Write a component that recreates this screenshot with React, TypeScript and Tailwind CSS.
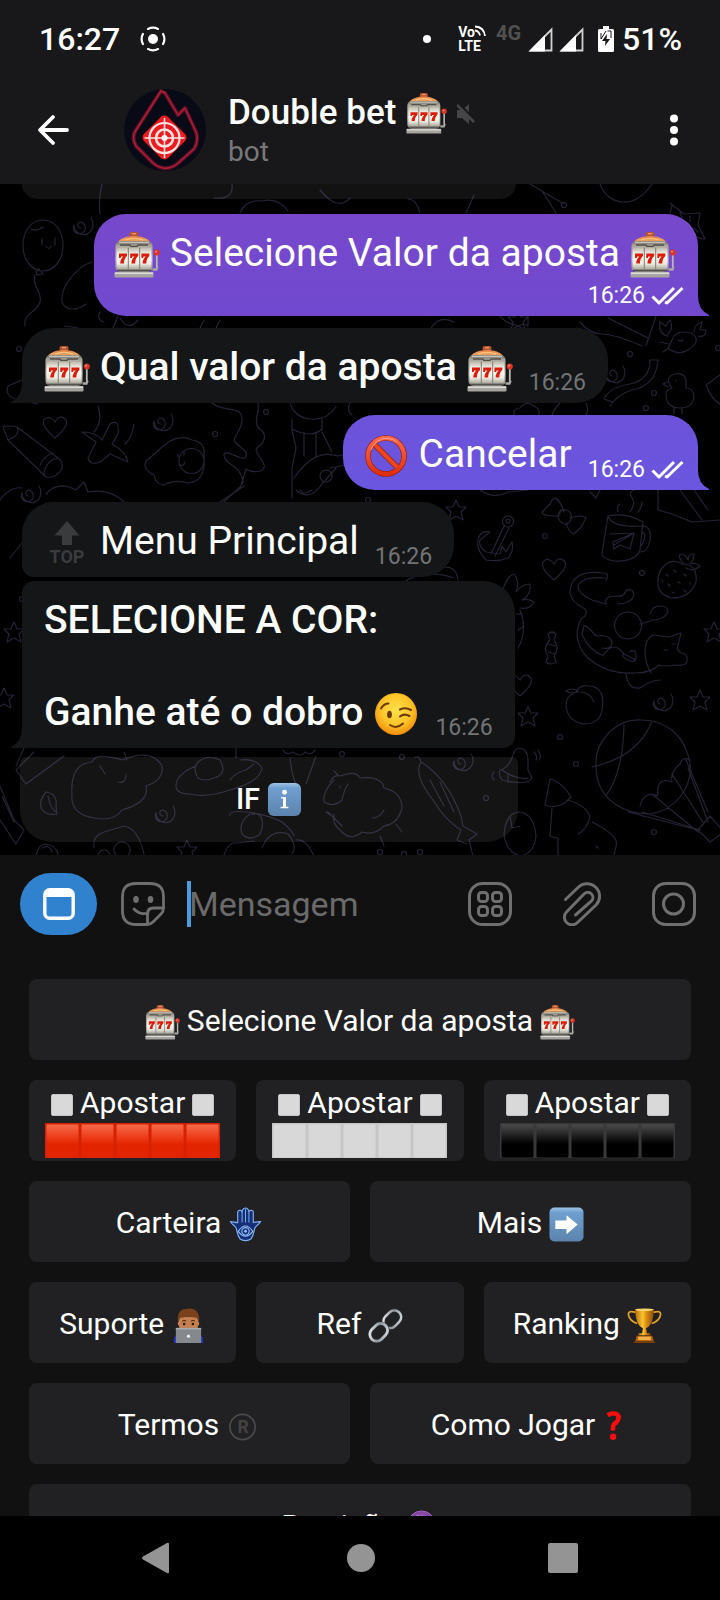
import type { ReactNode } from "react";

type IconProps = { className?: string };

// ---------- emoji ----------

function SharedGradients() {
  return (
    <svg className="absolute h-0 w-0" aria-hidden="true">
      <defs>
        <linearGradient id="dome" x1="0" y1="0" x2="0" y2="1">
          <stop offset="0" stopColor="#e07a45" />
          <stop offset="0.6" stopColor="#f3a45c" />
          <stop offset="1" stopColor="#d08048" />
        </linearGradient>
        <linearGradient id="steel" x1="0" y1="0" x2="0" y2="1">
          <stop offset="0" stopColor="#6f6c64" />
          <stop offset="0.15" stopColor="#a8a59b" />
          <stop offset="0.6" stopColor="#dbd9d1" />
          <stop offset="1" stopColor="#8a8880" />
        </linearGradient>
        <linearGradient id="reel" x1="0" y1="0" x2="0" y2="1">
          <stop offset="0" stopColor="#bdb8a9" />
          <stop offset="0.35" stopColor="#fcfbf5" />
          <stop offset="0.75" stopColor="#eeece4" />
          <stop offset="1" stopColor="#b0ac9f" />
        </linearGradient>
        <linearGradient id="blueTile" x1="0" y1="0" x2="0" y2="1">
          <stop offset="0" stopColor="#9fc4e6" />
          <stop offset="0.15" stopColor="#6f9fd0" />
          <stop offset="1" stopColor="#5c83ad" />
        </linearGradient>
        <linearGradient id="redTile" x1="0" y1="0" x2="0" y2="1">
          <stop offset="0" stopColor="#f56a4a" />
          <stop offset="0.45" stopColor="#ec3512" />
          <stop offset="0.6" stopColor="#e32400" />
        </linearGradient>
        <linearGradient id="blackTile" x1="0" y1="0" x2="0" y2="1">
          <stop offset="0" stopColor="#4c4a4a" />
          <stop offset="0.5" stopColor="#0b0b0b" />
          <stop offset="0.6" stopColor="#000" />
        </linearGradient>
        <linearGradient id="gold" x1="0" y1="0" x2="1" y2="0">
          <stop offset="0" stopColor="#b96a08" />
          <stop offset="0.4" stopColor="#fbc531" />
          <stop offset="0.6" stopColor="#d98e12" />
          <stop offset="1" stopColor="#8f4d04" />
        </linearGradient>
        <linearGradient id="chain" x1="0" y1="0" x2="1" y2="1">
          <stop offset="0" stopColor="#f3f5f7" />
          <stop offset="0.5" stopColor="#8d949b" />
          <stop offset="1" stopColor="#dfe4e8" />
        </linearGradient>
        <linearGradient id="noEntry" x1="0" y1="0" x2="0" y2="1">
          <stop offset="0" stopColor="#ff6a4d" />
          <stop offset="1" stopColor="#e02e0c" />
        </linearGradient>
        <radialGradient id="face" cx="0.5" cy="0.4" r="0.6">
          <stop offset="0" stopColor="#ffe14a" />
          <stop offset="0.6" stopColor="#fdc428" />
          <stop offset="1" stopColor="#f08c0c" />
        </radialGradient>
        <radialGradient id="crystal" cx="0.5" cy="0.4" r="0.6">
          <stop offset="0" stopColor="#b46ccb" />
          <stop offset="1" stopColor="#5d2a80" />
        </radialGradient>
      </defs>
    </svg>
  );
}

const seven = "M0 0h8v2.600c-2.300 2-3 4.200-3.100 7.400H1.200c.2-3 1.200-5 3-6.900H2.100l-.4 1.300H0z";

function SlotMachine({ className }: IconProps) {
  return (
    <svg viewBox="0 0 46 46" className={className} aria-hidden="true">
      <rect x="15.500" y="0" width="9" height="5" rx="2" fill="#b8532d" />
      <path d="M18 1.800h4" stroke="#f0a070" strokeWidth="1.200" />
      <path d="M3 10.500C7 6 13 4 20 4s13 2 17 6.500z" fill="url(#dome)" />
      <path d="M11 8Q20 4.500 29 8" stroke="#ffc98a" strokeWidth="1.200" fill="none" />
      <rect x="1.500" y="9" width="37" height="31" rx="5" fill="url(#steel)" />
      <path d="M5 10.200h30" stroke="#e3e0d6" strokeWidth="1" />
      <path d="M6 13h10l1 1.500h6l1-1.500h10" stroke="#55524b" strokeWidth="1.400" fill="none" />
      <rect x="3" y="15.500" width="34" height="21.500" rx="2" fill="url(#reel)" />
      <path d="M14.300 15.500V37M25.700 15.500V37" stroke="#7d7a70" strokeWidth="1" />
      <g fill="#dc1c0a">
        <path d={seven} transform="translate(5 21.500)" />
        <path d={seven} transform="translate(16.200 21.500)" />
        <path d={seven} transform="translate(27.400 21.500)" />
      </g>
      <path d="M3 38.500h34" stroke="#55534e" strokeWidth="1.400" />
      <rect x="0.500" y="40" width="39" height="5.500" rx="1" fill="#a5a49f" />
      <path d="M1 41.300h38" stroke="#dddcd8" strokeWidth="1.400" />
      <path d="M38.500 37.500h4l1-3" stroke="#a8a6a0" strokeWidth="2.400" fill="none" />
      <path d="M42.800 22v13" stroke="#bab8b2" strokeWidth="1.800" />
      <circle cx="42.800" cy="20.500" r="3" fill="#dc3527" />
      <circle cx="42" cy="19.600" r="0.900" fill="#ff9a8c" />
    </svg>
  );
}

function ProhibitedSign({ className }: IconProps) {
  return (
    <svg viewBox="0 0 46 46" className={className} aria-hidden="true">
      <circle cx="23" cy="23" r="18" fill="none" stroke="#8e1c08" strokeWidth="5.600" />
      <path d="m10.500 10.500 25 25" stroke="#8e1c08" strokeWidth="5.600" />
      <path d="m10.500 10.500 25 25" stroke="#ee4420" strokeWidth="4.200" />
      <circle cx="23" cy="23" r="18" fill="none" stroke="url(#noEntry)" strokeWidth="4.400" />
      <path d="M8 17a16.500 16.500 0 0 1 26-8" fill="none" stroke="#ff9d84" strokeWidth="1" />
    </svg>
  );
}

function TopArrow({ className }: IconProps) {
  return (
    <svg viewBox="0 0 46 46" className={className} aria-hidden="true">
      <path d="M23 1 35.500 15.500H28V25H18v-9.500h-7.500z" fill="#3a3b3c" />
      <text x="23" y="43" textAnchor="middle" fontFamily="Roboto, sans-serif" fontWeight="700" fontSize="18" fill="#3a3b3c">
        TOP
      </text>
    </svg>
  );
}

function WinkFace({ className }: IconProps) {
  return (
    <svg viewBox="0 0 46 46" className={className} aria-hidden="true">
      <circle cx="23" cy="23" r="21" fill="url(#face)" />
      <ellipse cx="16.500" cy="23.500" rx="2.400" ry="3.800" fill="#6b3a06" />
      <path
        d="M8 17.500q3-5 7.500-5M27 18.500q5.500-2.500 11 .5M27 25.500q4-3.500 9.500-.5M17 34q6.500 4.500 13-1.500"
        fill="none"
        stroke="#6b3a06"
        strokeWidth="2"
        strokeLinecap="round"
      />
    </svg>
  );
}

function InfoTile({ className }: IconProps) {
  return (
    <svg viewBox="0 0 36 36" className={className} aria-hidden="true">
      <rect x="1" y="1" width="34" height="34" rx="6" fill="url(#blueTile)" />
      <circle cx="18" cy="10.500" r="2.500" fill="#fff" />
      <path d="M14.500 15.500h5v10h2.500v1.500h-8v-1.500h2.500V17h-2z" fill="#fff" />
    </svg>
  );
}

function ArrowTile({ className }: IconProps) {
  return (
    <svg viewBox="0 0 36 36" className={className} aria-hidden="true">
      <rect x="0.500" y="0.500" width="35" height="35" rx="5" fill="url(#blueTile)" />
      <path d="M6.500 14H18V8.500L29.500 18 18 28v-5.500H6.500z" fill="#fff" />
    </svg>
  );
}

function Hamsa({ className }: IconProps) {
  return (
    <svg viewBox="0 0 36 36" className={className} aria-hidden="true">
      <path
        d="M10 16V5.500q0-2 2.200-2t2.300 2q0-2 .5-2.500 1-2 3-2t3 2q.5.500.5 2.500 0-2 2.300-2t2.200 2V16q4-1 7.500-1c-1 3-5 3.500-6 7-1 4-1 7-4 11q-2 1.500-5.500 1.500T12.500 33c-3-4-3-7-4-11-1-3.500-5-4-6-7 3.500 0 4 1 7.500 1z"
        fill="#152f76"
        stroke="#7fb0ee"
        strokeWidth="1.200"
      />
      <path d="M14.500 5v11M18 2v14M21.500 5v11" stroke="#7fb0ee" strokeWidth="1" />
      <path d="M10.500 25q7.500-11 15 0-7.500 10-15 0z" fill="none" stroke="#8fbdf5" strokeWidth="1.200" />
      <circle cx="18" cy="25" r="3.800" fill="none" stroke="#8fbdf5" strokeWidth="1.200" />
      <circle cx="18" cy="25" r="1.500" fill="#8fbdf5" />
    </svg>
  );
}

function Technologist({ className }: IconProps) {
  return (
    <svg viewBox="0 0 36 36" className={className} aria-hidden="true">
      <path d="M3 36q-1-8 6-10h18q7 2 6 10z" fill="#1b33c9" />
      <path d="M8 14q0-3 2-5h16q2 2 2 5 1 0 1 2t-1 2q-1 9-10 9T8 18q-1 0-1-2t1-2z" fill="#c58052" />
      <path d="M7.500 15Q5 2 15 1q8-2 12 3 3 4 1.500 11L27 10q-6 0-11-1.500-4 2-7 1.500z" fill="#7a411c" />
      <path d="M11.500 13.500q2-1.500 4 0M20.500 13.500q2-1.500 4 0" fill="none" stroke="#3c1d0a" strokeWidth="1" />
      <circle cx="13.500" cy="16.500" r="1.300" fill="#2a1508" />
      <circle cx="22.500" cy="16.500" r="1.300" fill="#2a1508" />
      <path d="M5 20.500h26V36H5z" fill="#85898e" />
      <path d="M5 20.500h26V22H5z" fill="#a9adb1" />
      <circle cx="18" cy="29" r="1.700" fill="#e8eaec" />
    </svg>
  );
}

function ChainLink({ className }: IconProps) {
  return (
    <svg viewBox="0 0 36 36" className={className} aria-hidden="true">
      <g fill="none">
        <rect x="15" y="4.500" width="20" height="14" rx="7" stroke="#2d3136" strokeWidth="4" transform="rotate(-45 25 11.500)" />
        <rect x="15" y="4.500" width="20" height="14" rx="7" stroke="url(#chain)" strokeWidth="2.400" transform="rotate(-45 25 11.500)" />
        <rect x="1" y="18" width="20" height="14" rx="7" stroke="#2d3136" strokeWidth="4" transform="rotate(-45 11 25)" />
        <rect x="1" y="18" width="20" height="14" rx="7" stroke="url(#chain)" strokeWidth="2.800" transform="rotate(-45 11 25)" />
      </g>
    </svg>
  );
}

function Trophy({ className }: IconProps) {
  return (
    <svg viewBox="0 0 36 36" className={className} aria-hidden="true">
      <path d="M9 4.500Q1 2 1.500 7q1 6 9 9M27 4.500q8-2.500 7.500 2.500-1 6-9 9" fill="none" stroke="#e0a02a" strokeWidth="1.800" />
      <path d="M8.500 1h19q0 16-7.500 19.500h-4Q8.500 17 8.500 1z" fill="url(#gold)" />
      <ellipse cx="18" cy="1.800" rx="9.500" ry="1.300" fill="#f8d36a" />
      <path d="M16.500 20h3l1 6h3.500v2H12v-2h3.500z" fill="url(#gold)" />
      <path d="M10 28.500h16l1.500 6h-19z" fill="#b45f08" />
      <path d="M11.500 29.500h13v3.500h-13z" fill="#f0b04a" />
      <path d="M7 34.500h22V36H7z" fill="#7a3d04" />
    </svg>
  );
}

function Registered({ className }: IconProps) {
  return (
    <svg viewBox="0 0 36 36" className={className} aria-hidden="true">
      <circle cx="17" cy="18.500" r="13" fill="none" stroke="#4a4a4b" strokeWidth="1.800" />
      <text x="17.500" y="25" textAnchor="middle" fontFamily="Roboto, sans-serif" fontWeight="700" fontSize="18" fill="#434344">
        R
      </text>
    </svg>
  );
}

function QuestionMark({ className }: IconProps) {
  return (
    <svg viewBox="0 0 28 36" className={className} aria-hidden="true">
      <path d="M5.500 6.500Q10 3.500 14 5q4 2 2 6.500-1 2-4 4-1.500 2-1 6.500" fill="none" stroke="#fb0d0d" strokeWidth="4.600" />
      <circle cx="11" cy="28.500" r="3.300" fill="#fb0d0d" />
    </svg>
  );
}

function CrystalBall({ className }: IconProps) {
  return (
    <svg viewBox="0 0 36 36" className={className} aria-hidden="true">
      <path d="M7 27h22l3 8H4z" fill="#8a5a2a" />
      <circle cx="18" cy="15" r="14" fill="url(#crystal)" stroke="#a866c4" strokeWidth="1" />
      <circle cx="14" cy="7.500" r="1.800" fill="#f3d8fb" />
    </svg>
  );
}

function SmallWhiteSquare() {
  return <span className="mt-1 h-[22px] w-[22px] rounded-xs border border-[#c4c4c4] bg-[#d9d9d9]" />;
}

const tiles = {
  red: { fill: "url(#redTile)", edge: "#d42200" },
  white: { fill: "#d8d8d8", edge: "#c6c6c6" },
  black: { fill: "url(#blackTile)", edge: "#39393a" },
};

function TileRow({ tone }: { tone: keyof typeof tiles }) {
  const { fill, edge } = tiles[tone];
  return (
    <svg viewBox="0 0 175 35" className="h-[35px] w-[175px] max-w-full" aria-hidden="true">
      {[0, 1, 2, 3, 4].map((n) => (
        <g key={n}>
          <rect x={n * 35} width="35" height="35" fill={edge} />
          <rect x={n * 35 + 1.5} y="1.500" width="32" height="33" rx="1" fill={fill} />
        </g>
      ))}
    </svg>
  );
}

// ---------- icons ----------

function DoubleCheck() {
  return (
    <svg viewBox="0 0 33 20" className="h-5 w-[33px]" fill="none" stroke="#fff" strokeWidth="3" aria-hidden="true">
      <path d="m1.500 10.500 6.500 6.500L23 2M14 16l2 1L31.500 2" strokeLinejoin="round" />
    </svg>
  );
}

function ScreenRecordIcon() {
  return (
    <svg viewBox="0 0 26 26" className="h-[26px] w-[26px]" aria-label="Gravando" role="img">
      <circle cx="13" cy="13" r="5" fill="#fff" />
      <g fill="none" stroke="#fff" strokeWidth="2.200" strokeLinecap="round">
        <path d="M8 2.900q5-2.600 10 0M8 23.100q5 2.600 10 0M2.900 8q-2.600 5 0 10M23.100 8q2.600 5 0 10" />
      </g>
    </svg>
  );
}

function SignalIcon() {
  return (
    <svg viewBox="0 0 25 25" className="h-[25px] w-[25px]" aria-hidden="true">
      <path d="M23.500 2.500v21H2.500z" fill="none" stroke="#d2d2d3" strokeWidth="1.800" />
      <path d="M1 24.500 17 8v16.500z" fill="#fff" />
    </svg>
  );
}

function BatteryIcon() {
  return (
    <svg viewBox="0 0 16 26" className="h-[26px] w-4" aria-hidden="true">
      <path d="M5 0h6v3h3.500A1.500 1.500 0 0 1 16 4.500v20a1.500 1.500 0 0 1-1.500 1.500h-13A1.500 1.500 0 0 1 0 24.500v-20A1.500 1.500 0 0 1 1.500 3H5z" fill="#fff" />
      <path d="M9 8 4 15h3.500L7 20l5-7H8.500z" fill="#18181a" />
      <path d="M3 7v6L8 5M9.500 5h3.500v7" stroke="#18181a" strokeWidth="1" fill="none" />
    </svg>
  );
}

function Avatar() {
  return (
    <svg viewBox="0 0 82 82" className="h-[82px] w-[82px] shrink-0" aria-hidden="true">
      <circle cx="41" cy="41" r="41" fill="#080b16" />
      <path
        d="M37 2 12 41Q7 48 12 57l17 17q12 10 24 1l17-15q5-8 2-17L61 19l-7 7-13-22z"
        fill="none"
        stroke="#5c1027"
        strokeWidth="4"
        strokeLinejoin="round"
      />
      <path
        d="M37 2 12 41Q7 48 12 57l17 17q12 10 24 1l17-15q5-8 2-17L61 19l-7 7-13-22z"
        fill="none"
        stroke="#b01f36"
        strokeWidth="1.400"
        strokeLinejoin="round"
      />
      <rect x="23.500" y="31.500" width="34" height="34" rx="5" transform="rotate(45 40.500 48.500)" fill="#ee1a20" />
      <g fill="none" stroke="#ffe3de">
        <circle cx="40.500" cy="49" r="15" strokeWidth="2.200" />
        <circle cx="40.500" cy="49" r="8.500" strokeWidth="2.600" />
        <path d="M40.500 29v40M20.500 49h40" strokeWidth="1.600" />
      </g>
      <circle cx="40.500" cy="49" r="3" fill="#fff" />
    </svg>
  );
}

function MutedIcon() {
  return (
    <svg viewBox="0 0 18 20" className="h-5 w-[18px]" aria-hidden="true">
      <path d="M0 6h5l7-6v20l-7-6H0z" fill="#454547" />
      <path d="M2 0 19 17" stroke="#18181a" strokeWidth="2.400" />
      <path d="m0 1 17 17" stroke="#454547" strokeWidth="2.600" />
    </svg>
  );
}

function StickerIcon() {
  return (
    <svg viewBox="0 0 44 44" className="h-11 w-11" fill="none" stroke="#6f6f6f" strokeWidth="2.800" aria-hidden="true">
      <path d="M42.500 26V15q0-13.500-13.500-13.500H15Q1.500 1.500 1.500 15v14q0 13.500 13.500 13.500h11q3.500 0 6-2.500l8-8q2.500-2.500 2.500-6z" />
      <path d="M26.500 42V32q0-6 6-6h10M13 27q6 6.500 14 4" strokeLinecap="round" />
      <ellipse cx="15" cy="17.500" rx="1.400" ry="2" fill="#6f6f6f" />
      <ellipse cx="29.500" cy="17.500" rx="1.400" ry="2" fill="#6f6f6f" />
    </svg>
  );
}

function CommandsIcon() {
  return (
    <svg viewBox="0 0 44 44" className="h-11 w-11" fill="none" stroke="#6f6f6f" strokeWidth="3" aria-hidden="true">
      <rect x="1.500" y="1.500" width="41" height="41" rx="13" />
      <rect x="10.500" y="10.500" width="9" height="9" rx="3" />
      <rect x="24.500" y="10.500" width="9" height="9" rx="3" />
      <rect x="10.500" y="24.500" width="9" height="9" rx="3" />
      <rect x="24.500" y="24.500" width="9" height="9" rx="3" />
    </svg>
  );
}

function ClipIcon() {
  return (
    <svg viewBox="0 0 44 44" className="h-11 w-11" fill="none" stroke="#6f6f6f" strokeWidth="3" strokeLinecap="round" aria-hidden="true">
      <path d="M5.500 17.500 18 5.500a12.500 12.500 0 0 1 18 17.500L17.500 40.500a7.500 7.500 0 0 1-11-10.500L24 12a5 5 0 0 1 7.500 7L15.500 33" />
    </svg>
  );
}

function CameraIcon() {
  return (
    <svg viewBox="0 0 44 44" className="h-11 w-11" fill="none" stroke="#6f6f6f" strokeWidth="3" aria-hidden="true">
      <rect x="1.500" y="1.500" width="41" height="41" rx="12" />
      <circle cx="21.500" cy="22" r="10" />
    </svg>
  );
}

// ---------- wallpaper ----------

const star = "m0-10 3 7 7 0-5 5 2 8-7-4-7 4 2-8-5-5 7 0z";
const swirl = "M1 2a3 3 0 1 1 2-5 6 6 0 1 1-9 2 9.500 9.500 0 0 0 16 7 11 11 0 0 0 1-14";
const heart = "M0 12Q-14 0-11-6-6-12 0-4 5-13 11-6 14 0 0 12z";

const doodles = [
  // balloon and string
  "M43 220c-13 0-20 12-20 26s9 25 20 25 20-11 20-25-7-26-20-26zM36 272l3-3 4 5-6 1zM35 275c-3 14 8 16 5 27s-17 10-15 24M31 229q6 3 12-2M42 239v6M55 238v7M46 246q3 5 5 0",
  // leaf, sock
  "M92 262c-14 4-32 24-30 40 4 10 16 8 24 2M100 312q-4 8 4 10M108 340l10-24M120 318q8 14 18 2",
  // pencil
  "M3 427l5 13 38 37q9 2 16-8 1-8-4-11L17 427q-6-2-14 0zM17 427q4 8-9 13M58 458q-8 1-12 9t0 10M53 453q-8 2-13 12",
  // toy plane
  "M82 432q14 0 20 8l8-16q10-6 8 10l-6 10q14 8 16 18l-18-8-10 8q-10 4-12-4l8-16zM98 406q5 16-4 26M134 424q-2 14-9 20",
  // fried egg
  "M170 441q12-6 22-1 14 2 12 16 2 26-16 27-14-4-24 2-8 0-10-10-12-6-8-14 10-8 16-14zM179 461a12.500 12.500 0 1 0 12.500-12.500A12.500 12.500 0 0 0 179 461M178 457v-3M184 455v-3M179 464q4 4 6-2",
  // flowing vines
  "M212 403c12 10 30 2 30 16s-12 18-6 24 12 8 10 14-22-10-22-2 12 10 16 18 4 10 0 14l-24 22M258 403c2 10-6 20 2 26s4 14-2 18 4 10 6 18-12 8-18 4l-6 20",
  // guitar player
  "M290 403q4 14 20 16t26-12M292 419v10q20 10 30 0v-10M292 430l4 18-4 20 0 30M322 432l10 20M304 432v24M316 432v24M294 478q20-30 44-22l16-4M296 490q14 12 26-6l14-16M326 470a6 6 0 1 0 .1 0M330 468l26-5M350 403q-4 8 2 12",
  // top row, behind the header edge
  "M102 184q-4 16-2 30M232 184q2 16-18 14M240 213q6-14 22-12 16-4 26 10M320 190q18 22 30 8M420 213q-4-14-12-14M466 213l8-18M530 184l34 20M600 184q6 16 22 18t30-18M556 213l-14-22",
  // starfish
  "M670 203l14 11 16-1-2 12 7 14q-8 0-14-6l-6 6M672 205l-2 10M680 212l2 6M690 216v6M694 228l4 4",
  // crab
  "M672 340q2-8 12-8t12 6-8 12-20-2zM668 336q-10-2-8-14l6 4 4-6q4 8-2 14M694 332q0-8 8-10l-2 8 6 0q0 8-8 6M668 344l-8-2M669 348l-6 4M678 340q3 2 5 0",
  // boot and cord
  "M580 322q10 12 22 12t40 12M608 318l40 20M646 346l10-30M576 328l8 2M500 316q6 8 20 10 2-4 8 0l0-10M430 330q8-16 24-8",
  // scarf
  "M658 360q-2 26-26 30-14 4-22 16M650 360q0 20-20 24-18 2-26 14M650 360h8M604 399l8 3",
  // duck
  "M672 388q-8-10 2-14 12-2 12 8l0 6q8 0 8 10-2 10-14 10-14 0-14-14 0-4 6-6M667 382l-4 2 5 3M676 380v1M674 408v6M682 408v6",
  // sail
  "M720 375l-14 10q6 16 16 20",
  // squid
  "M520 408q6-8 14-2 8 4 4 12l-14 12-8-12q-6-8 4-10zM560 403q-6 6-8 12M586 403q4 10-2 14",
  // anchor
  "M508 516a5.500 5.500 0 1 0 .1 0M508 519a2 2 0 1 0 .1 0M504 526l-13 28M509 528l-14 28M490 532q-10-2-12 8-2 10 8 20 12 2 22-2 6-6 4-16l-6 10-4-6-2 8-14-2q-8-6-6-12z",
  // bow
  "M556 498q-4 0-6 6l-8 8q0 4 16 4 2-8 6-6M556 498q6 6 8 14M558 518q2-10 8-8 8 2 4 12-6 6-12-4zM570 518q12-4 16 0l-4 8-8 8q-6-2-8-12",
  // mug
  "M608 516q18-4 35 6l-3 28q-4 12-26 11-12-2-12-8zM608 516q4 12 35 10M642 526q10 0 8 14-2 12-10 12M642 532q4 2 2 8t-4 6M610 534l24-1-4 16-10-4-6 4-1-7 21-9-20 12M618 512q-2-6 2-8M630 512q6-8 2-14t2-8M638 512q4-4 4-10",
  // strawberry
  "M664 566q8-8 18-2 16 0 14 18-6 16-24 16-16-4-14-18 0-8 6-14zM684 564q-6-6-4-10 6 0 8 6 0-6 6-6 0 6-4 10 6-2 10 2-6 6-14 2M666 574l2 2M674 570l2 2M684 574l2 2M690 582v2M668 584l2 2M678 582l2 1M672 592l2 1M684 590l2 2M662 580l1 2",
  // resting cat
  "M606 581q4-8-2-8-34-4-34 20 2 10 15 16 4 6-4 10-10 20 6 38 20 18 48 16 16 0 24-8 6 2 16 0 14 2 12-8-2-4-6-4l-4-4 4-16-12 4-16-2q-8 4-8 16 0 12 6 22M606 578q-24-2-28 8 0 8 14 14l14 4q-2-8 10-8 8 2 10-6 8-2 8 6-4 8-16 8M628 612a13.500 13.500 0 1 0 .1 0M640 624q8-2 12-4 12 0 16-8 0-6-8-6t-10 8M584 626q2-2 12 10 14-2 16 6 0 8-10 6M584 626l-2 8q6 16 22 22M604 654q10-14 20 0l12 6M630 652q6-4 6 4t-8 4-4-6M664 650h4M672 644h4M626 674q2 16 14 14 12-8 20-8",
  // pineapple
  "M504 586q4-10 10-12 6 8 2 18 6-8 14-8 2 10-8 16 6-2 12 2-4 8-14 6M504 586q-2 8 4 16M520 610q8 20-2 38M516 614h6M518 630l6-4",
  // candy
  "M548 634q4-4 8 0l-2 6q6 8 0 16l2 6q-6 4-10 0l2-6q-6-8 2-16zM548 644l8 2M548 652l8 2",
  // peach
  "M578 692q-12 2-12 14 2 16 18 18 16 0 18-14 4-22-12-24-10-2-14 6M566 691q6-4 12 0-4 4-12 0M580 692q10 0 14 10",
  // hot air balloon
  "M642 720c-26-2-48 22-46 46 0 34 28 48 54 48 26-4 42-26 40-50-4-28-24-44-48-44zM624 722q0 48-18 74M652 721q-14 36-60 46M628 812l70 18M642 812l58 18M652 794l46 38M672 774l32 50M686 760l22 52M688 768l20 54M690 760q-8-4-10 4-10 8-8 18-16-6-14 14-14-6-18 10M698 830l12-14 14 16-14 10z",
  // trees
  "M550 779l-5 26q10 4 20-2l6-6q-8-14-20-18zM552 808l-2 28q4 2 8 2M568 800q20 6 22 18-4 12-12 16M592 822q28 14 24 24l-2 10M558 838v18M596 846l2 2",
  // bell
  "M520 748q8 2 8 12v10l4 8q-4 8-30 2-4-6-2-10 8-2 12-12 2-10 8-10zM502 770q14 10 26 8M508 774v8h6M534 752q4 4 2 8M538 750q4 6 1 10M494 772q-4 4 0 8",
  // rocket
  "M415 757q4-2 6 5 26 16 40 54l2 10 14 8-8 6 4 16M421 762q-8 12 12 38 12 20 28 30l-4 10 10 4M430 780l14 26M440 782l14 30",
  // egg with crack
  "M520 812q-14 0-16 22 2 18 16 22 14-2 16-20-2-22-16-24zM510 816l2 12 8-2",
  // big cloud character
  "M92 762q4-10 30-2 30-12 40 6 2 14-16 20 4 16-24 24-8 12-28 8-24-4-22-24-2-30 20-32zM124 752l3 8M100 766l5 8M126 774q0 10-8 8",
  // leaf
  "M46 792q12 2 10 14l1 8q-12 2-16-6-2-8 5-16zM48 796q2 12 8 16",
  // pillow figure
  "M196 766q-20 8-20 20 0 8 14 8 16 4 40-4 30-8 32-22-6-10-22-8M198 762q-6 6 0 16 6 4 16 0 14-4 6-18-12-6-22 2M230 780q6-8 16-10l8-6M236 748v10",
  // cone
  "M283 750q4 6 10 2 8 6 12 0 6 4 10-2M290 758q2 18 6 26M316 756l-10 28",
  // sheep
  "M330 782q4-8 10-6 16-6 20 2 22-2 24 10 18 4 18 20-4 16-18 18-10 10-22 6-12 10-22-2-8-6-6-16M334 780q-12 12-10 22 10 6 18-2 2-10 6-16M338 775l-4-4M340 786v2M328 812l14 14M396 824l6 8M372 818q8 0 12-8M332 816l-6-4M380 836l4 10",
  // crate and camera
  "M94 848q-2-12 10-16l20-6q14 2 20 28M104 850a6 6 0 1 0 .1 0M122 842a8 8 0 1 0 .1 0M36 856q2-12 10-12 12 2 12 12M42 848q8-4 10 4M230 816q-2-6 16-4 20 2 36 10 10 8 12 14M250 814q-12 8-8 20 8 8 18 0 6-14-2-20zM262 848q8-20 26-14 10 12 4 20M224 855q4-14 14-12l16-2M296 840q10-2 18 16",
  // ruler at the left
  "M34 752l-18 18 10 14 38-28M16 766l8-18M0 786l14 34 10 10-8 14-16-24M2 796l12 26",
  // shells peeking between bubbles
  "M36 374l-28 12q-4 10 10 14l20 4M64 326l14 2M200 328l4-8M220 320l-4 8M0 500q10-14 22-12M46 494q12-14 30-4l8-8 4 10q22-4 36 10M220 502l24-16M300 490q4 6 12 0M480 490q14 10 28 2l20-2M590 492l6 6 4-8M658 490v20l14 4 20 8 28-2M680 490l22 30M694 490l14 20",
  // bats
  "M10 558l16-20 0 12M404 582q20-14 50-4M440 568q16-4 18 12",
];

const stars: [number, number][] = [[456, 510], [714, 632], [528, 716], [700, 700], [14, 632], [4, 698], [187, 850], [518, 320]];
const swirls: [number, number][] = [[80, 226], [160, 422], [28, 494], [162, 814], [460, 762], [660, 702], [612, 374]];
const hearts: [number, number][] = [[55, 426], [520, 684], [554, 568]];
const dots = [
  [19, 349], [215, 434], [266, 412], [545, 536], [642, 573], [560, 737], [576, 764], [402, 757], [486, 798], [654, 832],
  [564, 205], [630, 354], [654, 393], [646, 408], [22, 599], [342, 754], [718, 348], [368, 500], [380, 852], [404, 854], [420, 852],
];

function Wallpaper() {
  return (
    <svg
      viewBox="0 184 720 671"
      preserveAspectRatio="xMidYMin slice"
      className="absolute inset-0 h-full w-full"
      fill="none"
      stroke="#242234"
      strokeWidth="1.200"
      strokeLinejoin="round"
      strokeLinecap="round"
      aria-hidden="true"
    >
      {doodles.map((d) => (
        <path key={d} d={d} />
      ))}
      {stars.map(([x, y]) => (
        <path key={`s${x}-${y}`} d={star} transform={`translate(${x} ${y})`} />
      ))}
      {swirls.map(([x, y]) => (
        <path key={`w${x}-${y}`} d={swirl} transform={`translate(${x} ${y})`} />
      ))}
      {hearts.map(([x, y]) => (
        <path key={`h${x}-${y}`} d={heart} transform={`translate(${x} ${y})`} />
      ))}
      {dots.map(([x, y]) => (
        <circle key={`d${x}-${y}`} cx={x} cy={y} r="2.500" />
      ))}
    </svg>
  );
}

// ---------- messages ----------

const EMOJI = "mt-1 h-[46px] w-[46px] shrink-0";
const KEY_EMOJI = "mt-1 h-[35px] w-[35px] shrink-0";

function Line({ children, bold }: { children?: ReactNode; bold?: boolean }) {
  return <div className={`flex h-[46px] items-center gap-2.5 ${bold ? "font-medium" : ""}`}>{children}</div>;
}

function Tail({ side, className }: { side: "left" | "right"; className: string }) {
  return (
    <svg
      viewBox="0 0 12 20"
      className={`absolute bottom-0 h-5 w-3 ${side === "right" ? "-right-[11px]" : "-left-[11px] -scale-x-100"} ${className}`}
      aria-hidden="true"
    >
      <path d="M0 0h1q0 14 11 19v1H0z" />
    </svg>
  );
}

function Incoming({ children, tail, className }: { children: ReactNode; tail?: boolean; className: string }) {
  return (
    <div className={`relative flex w-fit items-end gap-4 bg-[#141618] px-[22px] pt-4 pb-[7px] ${className}`}>
      <div className="mb-1.5">{children}</div>
      <time className="text-[23px] leading-[27px] text-[#737476]">16:26</time>
      {tail && <Tail side="left" className="fill-[#141618]" />}
    </div>
  );
}

function SentTime() {
  return (
    <span className="flex items-center gap-1.5">
      <time className="text-[23px] leading-[27px]">16:26</time>
      <DoubleCheck />
    </span>
  );
}

function Key({ children }: { children: ReactNode }) {
  return (
    <button
      type="button"
      className="flex h-[81px] min-w-0 flex-1 items-center justify-center gap-[7px] rounded-lg bg-[#212123] pt-0.5 whitespace-nowrap"
    >
      {children}
    </button>
  );
}

function BetKey({ tone }: { tone: keyof typeof tiles }) {
  return (
    <Key>
      <span className="flex flex-col items-center gap-[3px]">
        <span className="flex h-[35px] items-center gap-[7px]">
          <SmallWhiteSquare />
          Apostar
          <SmallWhiteSquare />
        </span>
        <TileRow tone={tone} />
      </span>
    </Key>
  );
}

function KeyRow({ children }: { children: ReactNode }) {
  return <div className="flex gap-5">{children}</div>;
}

export default function App() {
  return (
    <div className="flex h-screen flex-col overflow-hidden bg-black font-[Roboto,sans-serif] text-white">
      <SharedGradients />

      <div className="flex h-[76px] shrink-0 items-center bg-[#18181a] pt-0.5 pr-[38px] pl-[39px] text-[32px] font-medium">
        <span>16:27</span>
        <span className="ml-5">
          <ScreenRecordIcon />
        </span>
        <span className="ml-auto h-2 w-2 rounded-full bg-white" />
        <span className="ml-[27px] flex flex-col text-[14px] leading-[14px] font-bold">
          <span className="flex items-start">
            Vo
            <svg viewBox="0 0 11 12" className="h-3 w-[11px]" fill="none" stroke="#fff" strokeWidth="1.800" aria-hidden="true">
              <path d="M0 1.500Q9 2 10 11M0 5.500q4 .5 5 5" />
            </svg>
          </span>
          <span>LTE</span>
        </span>
        <span className="ml-2.5 pb-3 text-[20px] leading-5 font-bold text-[#505051]">4G</span>
        <span className="ml-[7px] flex gap-1.5">
          <SignalIcon />
          <SignalIcon />
        </span>
        <span className="mr-2 ml-3.5">
          <BatteryIcon />
        </span>
        <span>51%</span>
      </div>

      <header className="flex h-[108px] shrink-0 items-center bg-[#18181a] pr-8 pl-9">
        <button type="button" aria-label="Voltar" className="mr-[52px]">
          <svg viewBox="0 0 36 36" className="h-9 w-9" fill="none" stroke="#fff" strokeWidth="3.800" strokeLinecap="round" strokeLinejoin="round">
            <path d="M17 5 4 18l13 13M4.500 18H31" />
          </svg>
        </button>
        <Avatar />
        <div className="ml-[22px] pt-[3px]">
          <h1 className="flex h-10 items-center gap-2.5 text-[35px] font-medium">
            Double bet
            <SlotMachine className="h-[41px] w-[41px]" />
            <MutedIcon />
          </h1>
          <p className="text-[28px] leading-9 text-[#78787a]">bot</p>
        </div>
        <button type="button" aria-label="Mais opções" className="ml-auto">
          <svg viewBox="0 0 28 36" className="h-9 w-7" fill="#fff">
            <circle cx="14" cy="6.500" r="4" />
            <circle cx="14" cy="18" r="4" />
            <circle cx="14" cy="29.500" r="4" />
          </svg>
        </button>
      </header>

      <main className="relative shrink-0 overflow-hidden">
        <Wallpaper />
        <div className="relative flex flex-col pr-[22px] pb-[13px] pl-[22px] text-[39px] whitespace-nowrap">
          <div className="mb-[15px] h-[15px] w-[494px] rounded-b-[32px] bg-white/7" />

          <div className="relative mb-3 self-end rounded-[32px] rounded-br-none bg-linear-to-b from-[#7748cb] to-[#7049d0] pt-4 pr-3.5 pb-[7px] pl-5">
            <div className="mb-1.5 pr-2">
              <Line>
                <SlotMachine className={EMOJI} />
                Selecione Valor da aposta
                <SlotMachine className={EMOJI} />
              </Line>
            </div>
            <div className="flex justify-end">
              <SentTime />
            </div>
            <Tail side="right" className="fill-[#7049d0]" />
          </div>

          <Incoming tail className="mb-3 rounded-[32px] rounded-bl-none">
            <Line bold>
              <SlotMachine className={EMOJI} />
              Qual valor da aposta
              <SlotMachine className={EMOJI} />
            </Line>
          </Incoming>

          <div className="relative mb-3 flex items-end gap-4 self-end rounded-[32px] rounded-br-none bg-linear-to-b from-[#6d52da] to-[#6a56df] pt-4 pr-3.5 pb-[7px] pl-5">
            <div className="mb-1.5">
              <Line>
                <ProhibitedSign className={EMOJI} />
                Cancelar
              </Line>
            </div>
            <SentTime />
            <Tail side="right" className="fill-[#6a56df]" />
          </div>

          <Incoming className="mb-1 rounded-[32px] rounded-bl-xl">
            <Line>
              <TopArrow className={EMOJI} />
              Menu Principal
            </Line>
          </Incoming>

          <Incoming tail className="mb-[9px] rounded-tl-xl rounded-tr-[32px] rounded-br-xl">
            <Line bold>SELECIONE A COR:</Line>
            <Line />
            <Line bold>
              Ganhe até o dobro
              <WinkFace className={EMOJI} />
            </Line>
          </Incoming>

          <button
            type="button"
            className="-ml-0.5 flex h-[85px] w-[498px] items-center justify-center gap-[7px] rounded-t-md rounded-b-[32px] bg-white/8 text-[29px] font-medium"
          >
            IF
            <InfoTile className="h-[35px] w-[35px] shrink-0" />
          </button>
        </div>
      </main>

      <form className="flex h-[102px] shrink-0 items-center bg-[#111111] pr-6 pb-1 pl-5">
        <button type="button" aria-label="Menu" className="flex h-[62px] w-[77px] items-center justify-center rounded-full bg-[#3182ce]">
          <svg viewBox="0 0 32 32" className="h-8 w-8" aria-hidden="true">
            <rect x="1.800" y="1.800" width="28.400" height="28.400" rx="5" fill="none" stroke="#fff" strokeWidth="3.400" />
            <path d="M2 3h28v6H2z" fill="#fff" />
          </svg>
        </button>
        <button type="button" aria-label="Figurinhas" className="ml-6">
          <StickerIcon />
        </button>
        <span className="ml-[22px] h-[46px] w-1 shrink-0 bg-[#4a9be0]" />
        <input
          type="text"
          aria-label="Mensagem"
          placeholder="Mensagem"
          className="-ml-0.5 min-w-0 flex-1 bg-transparent text-[34px] outline-none placeholder:text-[#6a6a6a]"
        />
        <div className="flex gap-12">
          <button type="button" aria-label="Comandos">
            <CommandsIcon />
          </button>
          <button type="button" aria-label="Anexar">
            <ClipIcon />
          </button>
          <button type="button" aria-label="Câmera">
            <CameraIcon />
          </button>
        </div>
      </form>

      <section className="flex min-h-0 flex-1 flex-col gap-5 overflow-hidden bg-[#111111] px-[29px] pt-[22px] text-[30px]">
        <KeyRow>
          <Key>
            <SlotMachine className={KEY_EMOJI} />
            Selecione Valor da aposta
            <SlotMachine className={KEY_EMOJI} />
          </Key>
        </KeyRow>
        <KeyRow>
          <BetKey tone="red" />
          <BetKey tone="white" />
          <BetKey tone="black" />
        </KeyRow>
        <KeyRow>
          <Key>
            Carteira
            <Hamsa className={KEY_EMOJI} />
          </Key>
          <Key>
            Mais
            <ArrowTile className={KEY_EMOJI} />
          </Key>
        </KeyRow>
        <KeyRow>
          <Key>
            Suporte
            <Technologist className={KEY_EMOJI} />
          </Key>
          <Key>
            Ref
            <ChainLink className={KEY_EMOJI} />
          </Key>
          <Key>
            Ranking
            <Trophy className={KEY_EMOJI} />
          </Key>
        </KeyRow>
        <KeyRow>
          <Key>
            Termos
            <Registered className={KEY_EMOJI} />
          </Key>
          <Key>
            Como Jogar
            <QuestionMark className="mt-1 h-[35px] w-7 shrink-0" />
          </Key>
        </KeyRow>
        <KeyRow>
          <Key>
            Previsão
            <CrystalBall className={KEY_EMOJI} />
          </Key>
        </KeyRow>
      </section>

      <nav className="flex h-[84px] shrink-0 items-center justify-between bg-black px-[142px]">
        <button type="button" aria-label="Voltar">
          <svg viewBox="0 0 32 32" className="h-8 w-8" fill="#949494">
            <path d="M27 1.500v29a1.500 1.500 0 0 1-2 .5L1 17.500q-2-1.500 0-3L25 1a1.500 1.500 0 0 1 2 .5z" />
          </svg>
        </button>
        <button type="button" aria-label="Início">
          <span className="block h-7 w-7 rounded-full bg-[#949494]" />
        </button>
        <button type="button" aria-label="Recentes">
          <span className="block h-[30px] w-[30px] rounded-xs bg-[#949494]" />
        </button>
      </nav>
    </div>
  );
}
